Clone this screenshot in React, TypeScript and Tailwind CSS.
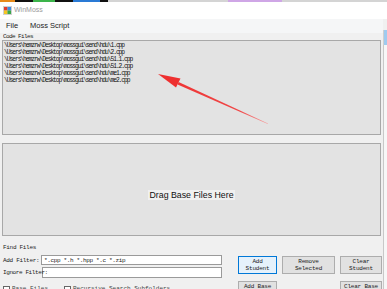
import React from 'react';

const files = [
  '\\Users\\hemzrw\\Desktop\\mossgui\\send\\hdu\\1.cpp',
  '\\Users\\hemzrw\\Desktop\\mossgui\\send\\hdu\\2.cpp',
  '\\Users\\hemzrw\\Desktop\\mossgui\\send\\hdu\\51.1.cpp',
  '\\Users\\hemzrw\\Desktop\\mossgui\\send\\hdu\\51.2.cpp',
  '\\Users\\hemzrw\\Desktop\\mossgui\\send\\hdu\\me1.cpp',
  '\\Users\\hemzrw\\Desktop\\mossgui\\send\\hdu\\me2.cpp',
];

const mono = { fontFamily: '"Liberation Mono", "DejaVu Sans Mono", monospace' };
const sans = { fontFamily: '"Liberation Sans", Arial, sans-serif' };

function WinButton({ lines, focused, className }: { lines: string[]; focused?: boolean; className: string }) {
  return (
    <div
      className={`flex flex-col items-center justify-center border text-[6px] leading-[7px] tracking-[-0.2px] text-[#222] whitespace-nowrap ${
        focused ? 'border-[#0078d7] bg-[#e5f1fb]' : 'border-[#adadad] bg-[#e1e1e1]'
      } ${className}`}
      style={mono}
    >
      {lines.map((l) => (
        <span key={l}>{l}</span>
      ))}
    </div>
  );
}

export default function App() {
  return (
    <div className="relative w-[387px] h-[289px] overflow-hidden bg-[#f0f0f0]">
      {/* taskbar strip at the very top */}
      <div className="flex h-[2px] bg-[#d4d4d4]">
        <div className="w-[15px] bg-[#e88a1a]" />
        <div className="w-[18px] bg-[#111]" />
        <div className="w-[22px] bg-[#3cb44b]" />
        <div className="w-[18px] bg-[#111]" />
        <div className="w-[27px] bg-[#2a7ad5]" />
        <div className="w-[8px] bg-[#111]" />
        <div className="w-[120px]" />
        <div className="w-[54px] bg-[#cfa6e6]" />
      </div>

      {/* title bar */}
      <div className="flex h-[17px] items-center bg-white pl-[3px]">
        <svg width="9" height="9" viewBox="0 0 9 9">
          <rect x="0" y="0" width="9" height="9" fill="#d0d0d0" />
          <rect x="1" y="1" width="3.5" height="3.5" fill="#e33b2e" />
          <rect x="4.5" y="1" width="3.5" height="3.5" fill="#3f8be0" />
          <rect x="1" y="4.5" width="3.5" height="3.5" fill="#f3c623" />
          <rect x="4.5" y="4.5" width="3.5" height="3.5" fill="#3aa84a" />
        </svg>
        <span className="ml-[2px] text-[7px] text-[#9a9a9a]" style={sans}>
          WinMoss
        </span>
      </div>

      <div className="flex">
        <div className="w-[383px]">
          {/* menu */}
          <div className="flex h-[14px] items-center bg-[#f5f6f7] text-[7.5px] text-[#222]" style={sans}>
            <span className="ml-[6px]">File</span>
            <span className="ml-[12px]">Moss Script</span>
          </div>

          <div className="h-[7px] pl-[3px] text-[6px] leading-[7px] tracking-[-0.6px] text-[#222]" style={mono}>
            Code Files
          </div>

          {/* code file list */}
          <div className="ml-[2px] h-[95px] w-[379px] border border-[#a8a8a8] bg-[#e3e3e3] pl-[1px] pt-[1px]">
            {files.map((f) => (
              <div
                key={f}
                className="h-[7px] text-[6.3px] leading-[7px] tracking-[-1.05px] text-[#111] whitespace-nowrap"
                style={mono}
              >
                {f}
              </div>
            ))}
          </div>

          {/* base files drop area */}
          <div className="ml-[2px] mt-[8px] flex h-[93px] w-[379px] items-center justify-center border border-[#a8a8a8] bg-[#e3e3e3]">
            <span className="mt-[11px] bg-[#f0f0f0] px-[1px] text-[8.8px] leading-[10px] text-[#111]" style={sans}>
              Drag Base Files Here
            </span>
          </div>

          {/* find files */}
          <div className="mt-[8px] h-[7px] pl-[3px] text-[6px] leading-[7px] tracking-[-0.3px] text-[#222]" style={mono}>
            Find Files
          </div>
          <div className="flex">
            <div className="w-[222px]">
              <div className="mt-[4px] flex h-[10px] items-center">
                <span className="relative z-10 w-[41px] shrink-0 whitespace-nowrap pl-[3px] text-[6px] tracking-[-0.3px] text-[#222]" style={mono}>
                  Add Filter:
                </span>
                <div
                  className="flex h-[10px] w-[181px] items-center whitespace-nowrap border border-[#9a9a9a] bg-white pl-[2px] text-[6px] tracking-[-0.35px] text-[#222]"
                  style={mono}
                >
                  *.cpp *.h *.hpp *.c *.zip
                </div>
              </div>
              <div className="mt-[2px] flex h-[11px] items-center">
                <span className="relative z-10 w-[42px] shrink-0 whitespace-nowrap pl-[3px] text-[6px] tracking-[-0.4px] text-[#222]" style={mono}>
                  Ignore Filter:
                </span>
                <div className="h-[11px] w-[180px] border border-[#9a9a9a] bg-white" />
              </div>
              <div className="mt-[7px] flex items-start gap-[2px] whitespace-nowrap pl-[3px] text-[6px] leading-[7px] text-[#444]" style={mono}>
                <div className="mt-[1px] h-[6px] w-[7px] border border-[#666] bg-white" />
                <span className="w-[50px]">Base Files</span>
                <div className="mt-[1px] h-[6px] w-[7px] border border-[#666] bg-white" />
                <span>Recursive Search Subfolders</span>
              </div>
            </div>
            <div className="ml-[16px]">
              <div className="mt-[5px] flex gap-[5px]">
                <WinButton lines={['Add', 'Student']} focused className="h-[18px] w-[39px]" />
                <WinButton lines={['Remove', 'Selected']} className="h-[18px] w-[53px]" />
                <WinButton lines={['Clear', 'Student']} className="h-[18px] w-[42px]" />
              </div>
              <div className="mt-[7px] flex gap-[63px]">
                <WinButton lines={['Add Base', 'Files']} className="h-[18px] w-[39px] justify-start pt-[1px]" />
                <WinButton lines={['Clear Base', 'Files']} className="h-[18px] w-[42px] justify-start pt-[1px]" />
              </div>
            </div>
          </div>
        </div>

        {/* neighbouring window edge */}
        <div className="flex w-[4px] flex-col">
          <div className="h-[11px] bg-[#f0f0f0]" />
          <div className="h-[15px] border-l border-[#d0d0d0] bg-[#9fcbef]" />
          <div className="flex-1 border-l border-[#c8c8c8] bg-[#f7f7f7]" />
        </div>
      </div>

      {/* red annotation arrow */}
      <svg className="pointer-events-none absolute left-0 top-0" width="387" height="289" viewBox="0 0 387 289">
        <defs>
          <linearGradient id="fade" x1="158" y1="74" x2="268" y2="123" gradientUnits="userSpaceOnUse">
            <stop offset="0" stopColor="#ee3030" />
            <stop offset="0.75" stopColor="#f04848" />
            <stop offset="1" stopColor="#f7a0a0" />
          </linearGradient>
        </defs>
        <polygon points="158,74 176,87.5 180.5,78.5" fill="#ee3030" />
        <polygon points="177.6,84.6 178.6,81.9 268,123.5 267.8,123.9" fill="url(#fade)" />
      </svg>
    </div>
  );
}
